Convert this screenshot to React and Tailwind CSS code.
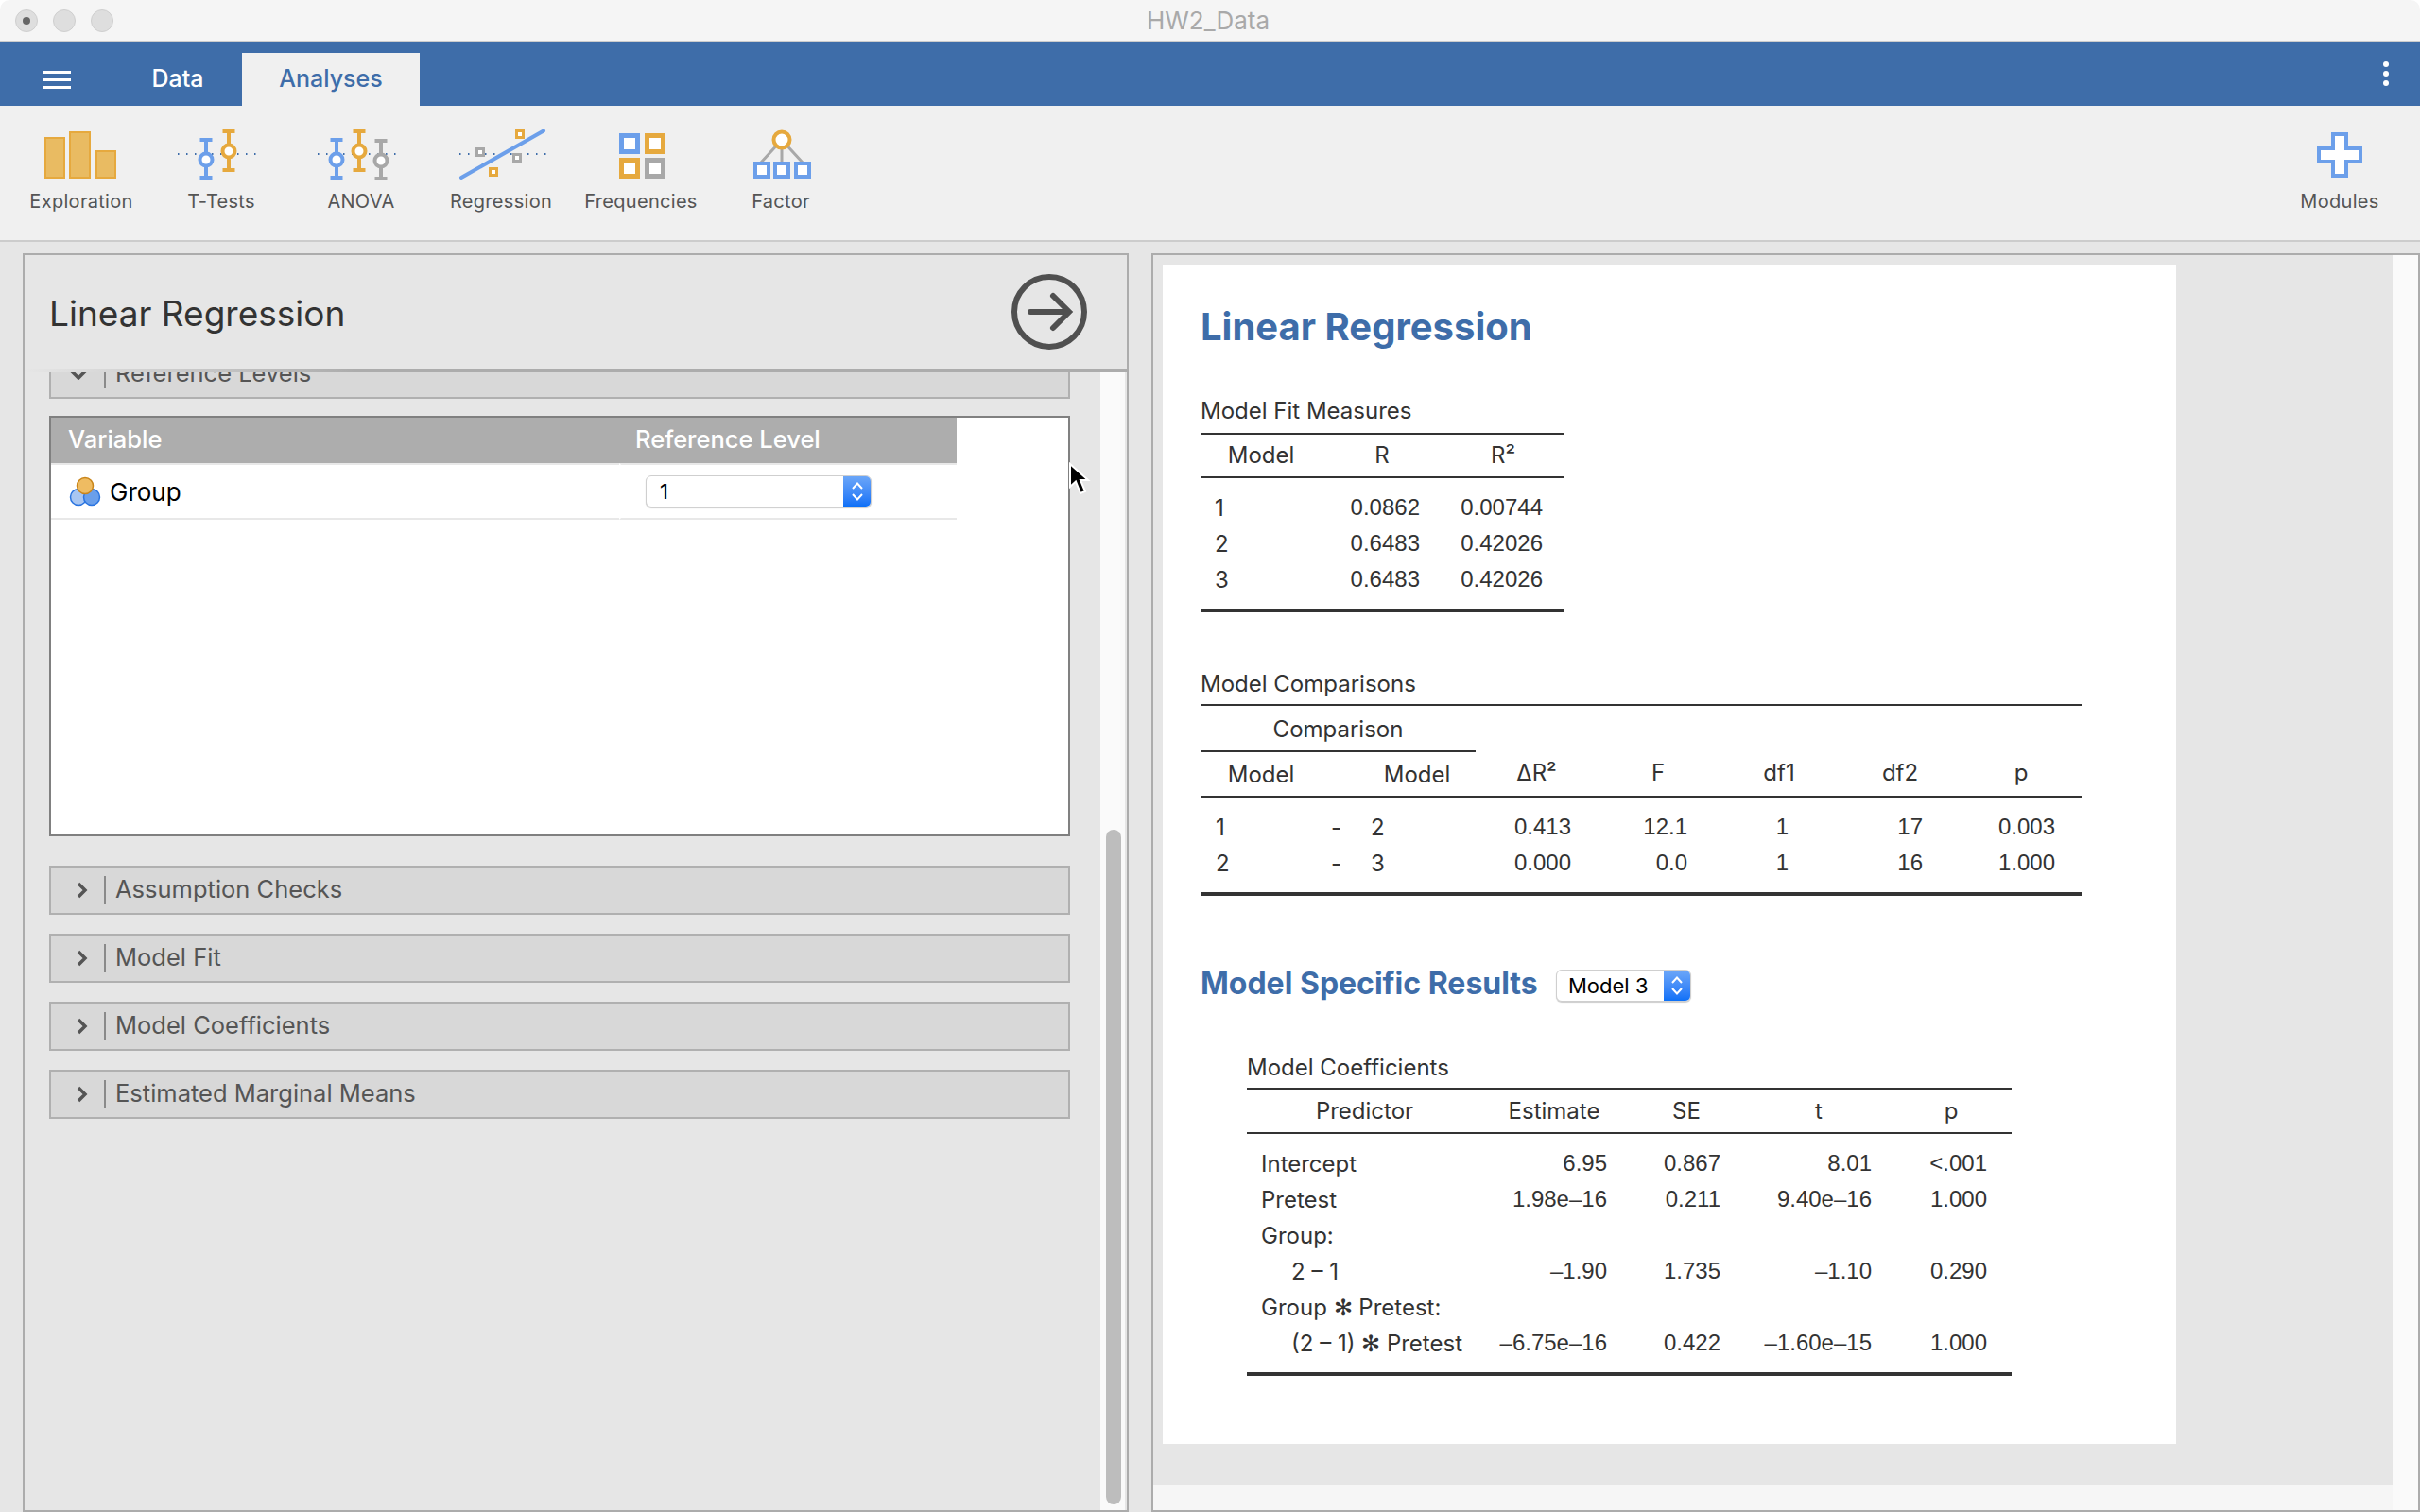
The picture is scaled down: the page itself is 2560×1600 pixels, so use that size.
import React from 'react';

const ORANGE = '#e6a93e';
const BLUE = '#6c9fea';
const GREY = '#a8a8a8';

const ErrorBar = ({ x, y1, y2, cy, color }) => (
  <g stroke={color} strokeWidth="4" fill="none">
    <path d={`M${x - 6.5} ${y1}H${x + 6.5}M${x} ${y1}V${y2}M${x - 6.5} ${y2}H${x + 6.5}`} />
    <circle cx={x} cy={cy} r="6.5" fill="#fff" />
  </g>
);

const Dots = ({ x1, x2 }) => (
  <path d={`M${x1} 163H${x2}`} stroke="#3e6da9" strokeWidth="2" strokeDasharray="1.5 7.5" fill="none" />
);

const Square = ({ x, y, size, stroke, color }) => (
  <rect x={x + stroke / 2} y={y + stroke / 2} width={size - stroke} height={size - stroke} fill="#fff" stroke={color} strokeWidth={stroke} />
);

const ToolIcon = ({ originX, children }) => (
  <svg width="120" height="56" viewBox={`${originX} 136 120 56`}>{children}</svg>
);

const tools = [
  {
    label: 'Exploration',
    originX: 26,
    icon: (
      <g fill="#e9bb62" stroke={ORANGE} strokeWidth="2">
        <rect x="48" y="146" width="20" height="42" />
        <rect x="74" y="140" width="21" height="48" />
        <rect x="102" y="160" width="20" height="28" />
      </g>
    ),
  },
  {
    label: 'T-Tests',
    originX: 174,
    icon: (
      <>
        <Dots x1={188} x2={278} />
        <ErrorBar x={218} y1={148} y2={188} cy={169} color={BLUE} />
        <ErrorBar x={242} y1={139} y2={180} cy={160} color={ORANGE} />
      </>
    ),
  },
  {
    label: 'ANOVA',
    originX: 322,
    icon: (
      <>
        <Dots x1={336} x2={426} />
        <ErrorBar x={356} y1={148} y2={188} cy={169} color={BLUE} />
        <ErrorBar x={380} y1={139} y2={180} cy={160} color={ORANGE} />
        <ErrorBar x={403} y1={149} y2={189} cy={170} color={GREY} />
      </>
    ),
  },
  {
    label: 'Regression',
    originX: 470,
    icon: (
      <>
        <Dots x1={486} x2={578} />
        <path d="M488 188L575 138.500" stroke={BLUE} strokeWidth="4" strokeLinecap="round" />
        <Square x={545} y={137} size={10} stroke={3} color={ORANGE} />
        <Square x={503} y={156} size={10} stroke={3} color={GREY} />
        <Square x={542} y={162} size={10} stroke={3} color={GREY} />
        <Square x={517} y={177} size={10} stroke={3} color={ORANGE} />
      </>
    ),
  },
  {
    label: 'Frequencies',
    originX: 618,
    icon: (
      <>
        <Square x={655} y={141} size={22} stroke={5} color={BLUE} />
        <Square x={682} y={141} size={22} stroke={5} color={ORANGE} />
        <Square x={655} y={167} size={22} stroke={5} color={ORANGE} />
        <Square x={682} y={167} size={22} stroke={5} color={GREY} />
      </>
    ),
  },
  {
    label: 'Factor',
    originX: 766,
    icon: (
      <>
        <path d="M827 148L805 172M827 148V172M827 148L849 172" stroke={GREY} strokeWidth="3" fill="none" />
        <circle cx="827" cy="148" r="8.500" fill="#fff" stroke={ORANGE} strokeWidth="4" />
        <Square x={797} y={171} size={18} stroke={4} color={BLUE} />
        <Square x={818} y={171} size={18} stroke={4} color={BLUE} />
        <Square x={840} y={171} size={18} stroke={4} color={BLUE} />
      </>
    ),
  },
];

const Tool = ({ label, originX, children }) => (
  <div className="flex w-[148px] flex-col items-center pt-[24px]">
    <ToolIcon originX={originX}>{children}</ToolIcon>
    <span className="mt-[8px] text-[20px] leading-[26px] tracking-[0.3px] text-[#555555]">{label}</span>
  </div>
);

const Stepper = ({ value, width, buttonWidth, padding }) => (
  <div className={`flex h-[34px] ${width} overflow-hidden rounded-[6px] border border-[#cfcfcf] bg-white shadow-[0_1px_1px_rgba(0,0,0,0.2)]`}>
    <span className={`flex-1 ${padding} text-[22px] leading-[32px] text-black`}>{value}</span>
    <div className={`flex ${buttonWidth} items-center justify-center bg-gradient-to-b from-[#6ba6f8] to-[#0a70f7]`}>
      <svg width="14" height="24" viewBox="0 0 14 24" fill="none" stroke="#fff" strokeWidth="2">
        <path d="M2 9L7 3.500L12 9M2 15L7 20.500L12 15" />
      </svg>
    </div>
  </div>
);

const Panel = ({ title, open }) => (
  <div className="mt-[20px] ml-[26px] flex h-[52px] shrink-0 items-center border-2 border-[#b0b0b0] bg-[#d8d8d8] first:mt-0">
    <div className={`flex h-[18px] w-[56px] items-center ${open ? 'pl-[19px]' : 'pl-[27px]'}`}>
      {open ? (
        <svg width="20" height="12" viewBox="0 0 20 12" fill="none" stroke="#555" strokeWidth="3.500">
          <path d="M2 2L10 10L18 2" />
        </svg>
      ) : (
        <svg width="12" height="18" viewBox="0 0 12 18" fill="none" stroke="#555" strokeWidth="3.500">
          <path d="M2 2L9 9L2 16" />
        </svg>
      )}
    </div>
    <div className="h-[30px] w-[2px] bg-[#8a8a8a]" />
    <span className="pb-[2px] pl-[10px] text-[25.5px] text-[#555555]">{title}</span>
  </div>
);

const Th = ({ children, className = '' }) => <div className={`text-center ${className}`}>{children}</div>;
const Td = ({ children, className = '' }) => (
  <div className={`text-right font-['Liberation_Sans',sans-serif] ${className}`}>{children}</div>
);

const TableTitle = ({ children, className = '' }) => (
  <div className={`flex items-center text-[24px] text-[#333333] ${className}`}>{children}</div>
);

const fitRows = [
  ['1', '0.0862', '0.00744'],
  ['2', '0.6483', '0.42026'],
  ['3', '0.6483', '0.42026'],
];

const comparisonRows = [
  ['1', '2', '0.413', '12.1', '1', '17', '0.003'],
  ['2', '3', '0.000', '0.0', '1', '16', '1.000'],
];

const coefRows = [
  ['Intercept', '6.95', '0.867', '8.01', '<.001'],
  ['Pretest', '1.98e\u201316', '0.211', '9.40e\u201316', '1.000'],
  ['Group:', '', '', '', ''],
  ['2 \u2013 1', '\u20131.90', '1.735', '\u20131.10', '0.290', true],
  ['Group \u273B Pretest:', '', '', '', ''],
  ['(2 \u2013 1) \u273B Pretest', '\u20136.75e\u201316', '0.422', '\u20131.60e\u201315', '1.000', true],
];

const FitTable = () => (
  <div className="mt-[43px] w-[384px]">
    <TableTitle className="mb-[2px] h-[42px]">Model Fit Measures</TableTitle>
    <div className="grid h-[48px] grid-cols-[128px_128px_128px] items-center border-y-2 border-[#333333]">
      <Th>Model</Th>
      <Th>R</Th>
      <Th>R²</Th>
    </div>
    <div className="border-b-4 border-[#333333] pt-[11px] pb-[13px]">
      {fitRows.map((row) => (
        <div key={row[0] + row[1]} className="grid h-[38px] grid-cols-[128px_128px_128px] items-center">
          <div className="pt-[3px] pl-[15px]">{row[0]}</div>
          <Td className="pr-[24px]">{row[1]}</Td>
          <Td className="pr-[22px]">{row[2]}</Td>
        </div>
      ))}
    </div>
  </div>
);

const cmpCols = 'grid-cols-[128px_39px_124px_129px_128px_128px_128px_128px]';

const ComparisonTable = () => (
  <div className="mt-[56px] w-[932px]">
    <TableTitle className="h-[40px]">Model Comparisons</TableTitle>
    <div className="mt-[1px] border-t-2 border-[#333333]">
      <div className="flex h-[47px] w-[291px] items-center justify-center pt-[3px]">Comparison</div>
      <div className="h-[2px] w-[291px] bg-[#333333]" />
    </div>
    <div className={`grid h-[46px] ${cmpCols} items-center pt-[1px]`}>
      <Th>Model</Th>
      <div />
      <Th>Model</Th>
      <Th className="pb-[3px]">ΔR²</Th>
      <Th className="pb-[3px]">F</Th>
      <Th className="pb-[3px]">df1</Th>
      <Th className="pb-[3px]">df2</Th>
      <Th className="pb-[3px]">p</Th>
    </div>
    <div className="border-t-2 border-b-4 border-[#333333] pt-[11px] pb-[13px]">
      {comparisonRows.map((row) => (
        <div key={row[0]} className={`grid h-[38px] ${cmpCols} items-center`}>
          <div className="pt-[3px] pl-[16px]">{row[0]}</div>
          <div className="pt-[3px] pl-[10px]">-</div>
          <div className="pt-[3px] pl-[13px]">{row[1]}</div>
          <Td className="pr-[28px]">{row[2]}</Td>
          <Td className="pr-[33px]">{row[3]}</Td>
          <Td className="pr-[54px]">{row[4]}</Td>
          <Td className="pr-[40px]">{row[5]}</Td>
          <Td className="pr-[28px]">{row[6]}</Td>
        </div>
      ))}
    </div>
  </div>
);

const coefCols = 'grid-cols-[255px_140px_140px_140px_134px]';

const CoefTable = () => (
  <div className="mt-[44px] ml-[49px] w-[809px]">
    <TableTitle className="h-[40px]">Model Coefficients</TableTitle>
    <div className={`mt-[1px] grid h-[47px] ${coefCols} items-center border-t-2 border-[#333333]`}>
      <Th className="pr-[6px]">Predictor</Th>
      <Th>Estimate</Th>
      <Th>SE</Th>
      <Th>t</Th>
      <Th className="pl-[6px]">p</Th>
    </div>
    <div className="border-t-2 border-b-4 border-[#333333] pt-[11px] pb-[13px]">
      {coefRows.map((row) => (
        <div key={row[0]} className={`grid h-[38px] ${coefCols} items-center`}>
          <div className={`pt-[3px] ${row[5] ? 'pl-[47px]' : 'pl-[15px]'} whitespace-nowrap`}>{row[0]}</div>
          <Td className="pr-[14px]">{row[1]}</Td>
          <Td className="pr-[34px]">{row[2]}</Td>
          <Td className="pr-[14px]">{row[3]}</Td>
          <Td className="pr-[26px]">{row[4]}</Td>
        </div>
      ))}
    </div>
  </div>
);

const Cursor = () => (
  <svg className="absolute top-[489px] left-[1130px]" width="24" height="36" viewBox="0 0 24 36">
    <path d="M2 2V26L8 20.500L13 33L18 31L13 19H21Z" fill="#000" stroke="#fff" strokeWidth="2" />
  </svg>
);

const App = () => {
  return (
    <div className="relative flex h-[1600px] w-[2560px] flex-col overflow-hidden bg-white font-['Inter','Liberation_Sans',sans-serif]">
      {/* Window title */}
      <div className="flex h-[44px] shrink-0 items-center rounded-t-[10px] border-b border-[#cccccc] bg-[#f5f5f5]">
        <div className="flex w-[200px] gap-[16px] pl-[16px]">
          <div className="flex h-[24px] w-[24px] items-center justify-center rounded-full border border-[#cfcfcf] bg-[#dedede]">
            <div className="h-[8px] w-[8px] rounded-full bg-[#666666]" />
          </div>
          <div className="h-[24px] w-[24px] rounded-full border border-[#cfcfcf] bg-[#dedede]" />
          <div className="h-[24px] w-[24px] rounded-full border border-[#cfcfcf] bg-[#dedede]" />
        </div>
        <div className="flex-1 pr-[204px] text-center text-[26px] text-[#a9a9a9]">HW2_Data</div>
      </div>

      {/* Tabs */}
      <div className="flex h-[68px] shrink-0 items-end bg-[#3e6da9]">
        <div className="mb-[18px] ml-[45px] flex w-[30px] flex-col gap-[5px]">
          <div className="h-[3px] bg-white" />
          <div className="h-[3px] bg-white" />
          <div className="h-[3px] bg-white" />
        </div>
        <div className="ml-[45px] flex h-[56px] w-[136px] items-center justify-center text-[25px] font-medium text-white">Data</div>
        <div className="flex h-[56px] w-[188px] items-center justify-center bg-[#f0f0f0] text-[25px] font-medium text-[#3e6da9]">Analyses</div>
        <div className="mr-[33px] mb-[21px] ml-auto flex flex-col gap-[4px]">
          <div className="h-[6px] w-[6px] rounded-full bg-white" />
          <div className="h-[6px] w-[6px] rounded-full bg-white" />
          <div className="h-[6px] w-[6px] rounded-full bg-white" />
        </div>
      </div>

      {/* Toolbar */}
      <div className="flex h-[144px] shrink-0 border-b-2 border-[#cccccc] bg-[#f0f0f0] pr-[11px] pl-[12px]">
        {tools.map((tool) => (
          <Tool key={tool.label} label={tool.label} originX={tool.originX}>
            {tool.icon}
          </Tool>
        ))}
        <div className="ml-auto">
          <Tool label="Modules" originX={2415}>
            <path
              d="M2468 142H2482V157H2497V171H2482V186H2468V171H2453V157H2468Z"
              fill="#fff"
              stroke={BLUE}
              strokeWidth="4"
            />
          </Tool>
        </div>
      </div>

      {/* Options and results */}
      <div className="flex min-h-0 flex-1 gap-[24px] bg-[#e6e6e6] pt-[12px] pl-[24px]">
        <div className="flex w-[1170px] flex-col border-2 border-[#acacac]">
          <div className="flex h-[120px] shrink-0 items-center justify-between pr-[42px] pl-[26px]">
            <span className="pt-[4px] text-[37px] text-[#333333]">Linear Regression</span>
            <svg width="80" height="80" viewBox="0 0 80 80" fill="none" stroke="#505050" strokeWidth="6" strokeLinecap="round">
              <circle cx="40" cy="40" r="37" />
              <path d="M20 40H60M44 23L61 40L44 57" />
            </svg>
          </div>
          <div className="h-[4px] shrink-0 bg-gradient-to-r from-[#e6e6e6] to-[#acacac] to-[30%]" />
          <div className="flex min-h-0 flex-1">
            <div className="flex-1 overflow-hidden pr-[32px]">
              <div className="-mt-[24px] flex flex-col">
                <Panel title="Reference Levels" open />
                <div className="mt-[18px] ml-[26px] h-[445px] shrink-0 border-2 border-[#808080] bg-white">
                  <div className="grid w-[958px] grid-cols-[601px_357px]">
                    <div className="flex h-[48px] items-center bg-[#adadad] pb-[2px] pl-[18px] text-[25.5px] font-medium text-white">Variable</div>
                    <div className="flex h-[48px] items-center bg-[#adadad] pb-[2px] pl-[17px] text-[25.5px] font-medium text-white">Reference Level</div>
                    <div className="flex h-[60px] items-center border-y-2 border-[#e8e8e8] pl-[19px]">
                      <svg width="34" height="32" viewBox="0 0 34 32">
                        <circle cx="10" cy="22" r="8.500" fill="#a8c6f2" stroke="#2a74e0" strokeWidth="1.500" />
                        <circle cx="24" cy="22" r="8.500" fill="#6a9fea" stroke="#2a74e0" strokeWidth="1.500" />
                        <circle cx="17" cy="10" r="8.500" fill="#efbc62" stroke="#c9851a" strokeWidth="1.500" />
                      </svg>
                      <span className="pl-[9px] text-[26px] text-black">Group</span>
                    </div>
                    <div className="flex h-[60px] items-center border-y-2 border-[#e8e8e8] border-l-2 border-l-white pl-[26px]">
                      <Stepper value="1" width="w-[239px]" buttonWidth="w-[29px]" padding="pl-[14px]" />
                    </div>
                  </div>
                </div>
                <div className="mt-[31px]">
                  <Panel title="Assumption Checks" />
                </div>
                <Panel title="Model Fit" />
                <Panel title="Model Coefficients" />
                <Panel title="Estimated Marginal Means" />
              </div>
            </div>
            <div className="mr-[2px] w-[26px] bg-[#fafafa] pt-[484px] pb-[6px] pl-[6px]">
              <div className="h-full w-[16px] rounded-full bg-[#bdbdbd]" />
            </div>
          </div>
        </div>

        <div className="flex min-w-0 flex-1 border-2 border-[#acacac]">
          <div className="flex min-w-0 flex-1 flex-col">
            <div className="flex-1 pt-[10px] pl-[10px]">
              <div className="h-[1248px] w-[1072px] bg-white pt-[41px] pl-[40px] text-[24px] text-[#333333]">
                <h1 className="flex h-[50px] items-center text-[40px] font-bold text-[#3e6da9]">Linear Regression</h1>
                <FitTable />
                <ComparisonTable />
                <div className="mt-[68px] flex h-[50px] items-center">
                  <h2 className="w-[376px] text-[32px] font-bold text-[#3e6da9]">Model Specific Results</h2>
                  <div className="pt-[4px]">
                    <Stepper value="Model 3" width="w-[143px]" buttonWidth="w-[28px]" padding="pl-[12px]" />
                  </div>
                </div>
                <CoefTable />
              </div>
            </div>
            <div className="h-[27px] shrink-0 bg-[#f6f6f6]" />
          </div>
          <div className="w-[27px] shrink-0 bg-[#fafafa]" />
        </div>
      </div>

      <Cursor />
    </div>
  );
};

export default App;
